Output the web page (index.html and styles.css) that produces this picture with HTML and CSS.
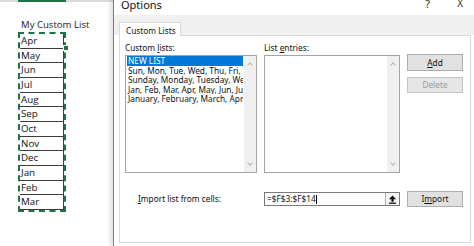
FILE: index.html
```html
<!DOCTYPE html>
<html>
<head>
<meta charset="utf-8">
<link rel="stylesheet" href="styles.css">
</head>
<body>
<div class="sheet">
  <div class="colhdr"><div class="colsel"></div></div>
  <div class="heading">My Custom List</div>
  <div class="cells">
    <div class="cell">Apr</div>
    <div class="cell">May</div>
    <div class="cell">Jun</div>
    <div class="cell">Jul</div>
    <div class="cell">Aug</div>
    <div class="cell">Sep</div>
    <div class="cell">Oct</div>
    <div class="cell">Nov</div>
    <div class="cell">Dec</div>
    <div class="cell">Jan</div>
    <div class="cell">Feb</div>
    <div class="cell">Mar</div>
    <div class="handle"></div>
  </div>
</div>
<div class="dialog">
  <div class="titlebar">
    <span class="title">Options</span>
    <span class="tbtn q">?</span>
    <span class="tbtn x">X</span>
  </div>
  <div class="tabstrip">
    <div class="tab">Custom Lists</div>
  </div>
  <div class="panel">
    <div class="top">
      <div class="col c1">
        <div class="label">Custom <u>l</u>ists:</div>
        <div class="listbox">
          <div class="items">
            <div class="item sel">NEW LIST</div>
            <div class="item">Sun, Mon, Tue, Wed, Thu, Fri, Sat</div>
            <div class="item">Sunday, Monday, Tuesday, Wednesday</div>
            <div class="item">Jan, Feb, Mar, Apr, May, Jun, Jul</div>
            <div class="item">January, February, March, April</div>
          </div>
          <div class="scroll"><span class="chev up"></span><span class="chev down"></span></div>
        </div>
      </div>
      <div class="col c2">
        <div class="label">List <u>e</u>ntries:</div>
        <div class="listbox">
          <div class="items"></div>
          <div class="scroll"><span class="chev up"></span><span class="chev down"></span></div>
        </div>
      </div>
      <div class="btns">
        <div class="btn"><u>A</u>dd</div>
        <div class="btn dis">Delete</div>
      </div>
    </div>
    <div class="importrow">
      <div class="implabel"><u>I</u>mport list from cells:</div>
      <div class="input">
        <span class="val">=$F$3:$F$14<span class="caret"></span></span>
        <span class="collapse"><svg width="9" height="9" viewBox="0 0 9 9"><path d="M4.5 0.5 L8 4.2 L5.6 4.2 L5.6 6.8 L3.4 6.8 L3.4 4.2 L1 4.2 Z" fill="#000"/><rect x="1" y="7.6" width="7" height="1.2" fill="#000"/></svg></span>
      </div>
      <div class="btn imp">I<u>m</u>port</div>
    </div>
  </div>
</div>
</body>
</html>
```

FILE: styles.css
```css
html, body {
  margin: 0;
  padding: 0;
  background: #fff;
}
body {
  width: 474px;
  height: 246px;
  overflow: hidden;
  display: flex;
  font-family: "Noto Sans", "Open Sans", sans-serif;
}
u { text-decoration: underline; text-underline-offset: 1px; }

.sheet {
  width: 113px;
  flex: none;
  background: #fff;
}
.colhdr {
  height: 2px;
  background: #dadada;
}
.colsel {
  margin-left: 18px;
  width: 48px;
  height: 2px;
  background: #217346;
}
.heading {
  margin-top: 17px;
  padding-left: 21px;
  font-family: "Open Sans", sans-serif;
  font-size: 9.6px;
  line-height: 12px;
  color: #222;
}
.cells {
  position: relative;
  margin-left: 18px;
  margin-top: 1px;
  width: 44px;
  border: 2px dashed #217346;
  background: #fff;
}
.cell {
  height: 13.67px;
  border-bottom: 1px solid #3c3c3c;
  border-right: 1px solid #3c3c3c;
  font-family: "Open Sans", sans-serif;
  font-size: 9.8px;
  line-height: 14px;
  padding-left: 1px;
  color: #111;
}
.cell:last-of-type { border-bottom: none; }
.handle {
  position: absolute;
  left: 43px;
  top: 11px;
  width: 4px;
  height: 4px;
  background: #217346;
  border: 1px solid #fff;
}

.dialog {
  flex: 1;
  border-left: 1px solid #7d7d7d;
  box-shadow: -3px 0 4px rgba(0,0,0,0.12);
  background: #fff;
  display: flex;
  flex-direction: column;
  font-size: 8.3px;
  color: #111;
}
.titlebar {
  height: 15px;
  display: flex;
  align-items: flex-start;
  position: relative;
}
.title {
  margin-top: -2px;
  margin-left: 7px;
  font-size: 11px;
  line-height: 13px;
}
.tbtn {
  margin-top: -3px;
  font-size: 11px;
  line-height: 13px;
  color: #333;
}
.q { margin-left: auto; margin-right: 27px; }
.x { margin-right: 11px; font-size: 10px; }

.tabstrip {
  height: 20px;
  background: #f0f0f0;
  padding-left: 5px;
  display: flex;
  align-items: flex-end;
}
.tab {
  width: 62px;
  height: 14px;
  background: #fff;
  border: 1px solid #d9d9d9;
  border-bottom: none;
  margin-bottom: -1px;
  position: relative;
  z-index: 1;
  padding-left: 6px;
  box-sizing: border-box;
  line-height: 15px;
}
.panel {
  margin-left: 5px;
  width: 352px;
  height: 208px;
  border: 1px solid #d9d9d9;
  background: #fff;
  box-sizing: border-box;
  padding: 7px 0 0 5px;
  display: flex;
  flex-direction: column;
}
.top {
  display: flex;
  gap: 7px;
}
.col { display: flex; flex-direction: column; }
.c1 { width: 132px; }
.c2 { width: 136px; }
.label {
  height: 10px;
  line-height: 10px;
  margin-bottom: 2px;
}
.listbox {
  height: 118px;
  border: 1px solid #a5a5a5;
  box-sizing: border-box;
  display: flex;
  background: #fff;
}
.items {
  flex: 1;
  min-width: 0;
  padding: 0 1px;
  overflow: hidden;
}
.item {
  height: 9.6px;
  line-height: 9.6px;
  white-space: nowrap;
  overflow: hidden;
  padding-left: 1px;
}
.item.sel {
  background: #0078d7;
  color: #fff;
}
.scroll {
  width: 12px;
  background: #f0f0f0;
  display: flex;
  flex-direction: column;
  justify-content: space-between;
  align-items: center;
  padding: 5px 0;
}
.chev {
  width: 3px;
  height: 3px;
  border-left: 1px solid #b4b4b4;
  border-top: 1px solid #b4b4b4;
}
.chev.up { transform: rotate(45deg); margin-top: 2px; }
.chev.down { transform: rotate(225deg); margin-bottom: 2px; }

.btns {
  width: 56px;
  display: flex;
  flex-direction: column;
  gap: 6px;
  padding-top: 11px;
}
.btn {
  height: 17px;
  box-sizing: border-box;
  background: #e1e1e1;
  border: 1px solid #adadad;
  display: flex;
  align-items: center;
  justify-content: center;
  line-height: 10px;
}
.btn.dis {
  height: 16px;
  color: #9a9a9a;
  border-color: #c4c4c4;
  background: #e6e6e6;
}
.importrow {
  margin-top: 18px;
  display: flex;
  align-items: center;
}
.implabel {
  width: 139px;
  padding-left: 13px;
  box-sizing: border-box;
  line-height: 10px;
}
.input {
  width: 136px;
  height: 14px;
  box-sizing: border-box;
  border: 1px solid #7a7a7a;
  display: flex;
  align-items: center;
}
.val {
  flex: 1;
  padding-left: 2px;
  line-height: 10px;
  display: flex;
  align-items: center;
}
.caret {
  display: inline-block;
  width: 1px;
  height: 9px;
  background: #000;
}
.collapse {
  width: 14px;
  height: 12px;
  box-sizing: border-box;
  border-left: 1px solid #adadad;
  background: #f3f3f3;
  display: flex;
  align-items: center;
  justify-content: center;
}
.btn.imp {
  width: 56px;
  height: 16px;
  margin-left: 7px;
}
```
